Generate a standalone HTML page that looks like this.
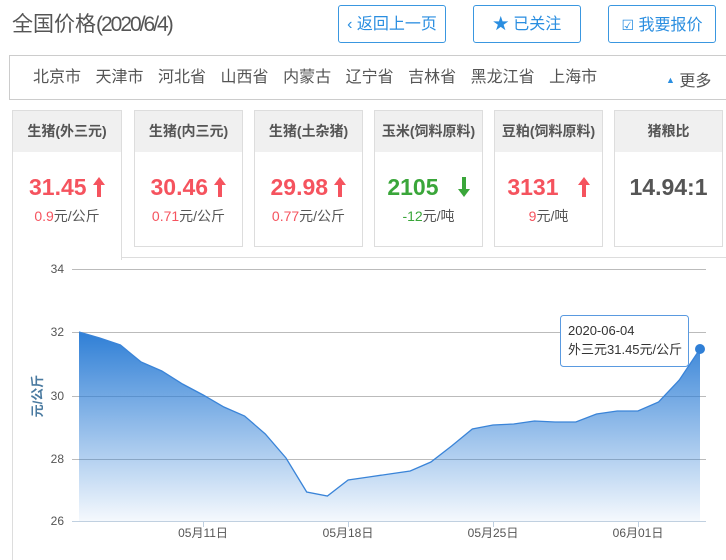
<!DOCTYPE html>
<html><head><meta charset="utf-8"><style>
body{margin:0;width:726px;height:558px;overflow:hidden;background:#fff;font-family:"Liberation Sans","Noto Sans CJK SC",sans-serif;position:relative}
.a{position:absolute}
.btn{position:absolute;top:5px;height:38px;width:108px;border:1px solid #3a97e0;border-radius:3px;color:#2a8ee0;font-size:16px;line-height:38px;text-align:center;box-sizing:border-box}
.card{position:absolute;top:110px;width:109px;height:137px;border:1px solid #ddd;box-sizing:border-box;text-align:center}
.card .h{background:#f0f0f0;height:41px;line-height:41px;font-size:14px;font-weight:bold;color:#555}
.card .v{font-size:23px;font-weight:bold;margin-top:20px;height:30px;line-height:30px}
.card .s{font-size:14px;color:#555;margin-top:4px}
.r{color:#f5535e}.g{color:#3aa63a}
.reg span{margin-right:14.5px}
svg.ar{vertical-align:-2px}
</style></head><body>
<div class="a" style="left:12px;top:8px;font-size:21px;color:#555">全国价格<span style="letter-spacing:-2px">(2020/6/4)</span></div>
<div class="btn" style="left:338px">&lsaquo; 返回上一页</div>
<div class="btn" style="left:473px">★ 已关注</div>
<div class="btn" style="left:608px"><span style="font-size:14px">☑</span> 我要报价</div>
<div class="a reg" style="left:9px;top:55px;width:730px;height:45px;border:1px solid #ccc;box-sizing:border-box;font-size:16px;color:#555;line-height:43px;padding-left:23px">
<span>北京市</span><span>天津市</span><span>河北省</span><span>山西省</span><span>内蒙古</span><span>辽宁省</span><span>吉林省</span><span>黑龙江省</span><span>上海市</span></div>
<div class="a" style="left:666px;top:67px;font-size:16px;color:#555"><span style="color:#2a8ee0;font-size:9px;vertical-align:3px">▲</span> 更多</div>
<div class="a" style="left:122px;top:257px;width:610px;border-top:1px solid #ddd"></div>
<div class="a" style="left:12px;top:110px;width:1px;height:450px;background:#ddd"></div>
<div class="card" style="left:13px;height:150px;border-bottom:none;border-left:none"><div class="h">生猪(外三元)</div><div class="v r">31.45 <svg class="ar" width="12" height="20" viewBox="0 0 12 20"><path d="M6 0L0 8h4v12h4V8h4z" fill="#f5535e"/></svg></div><div class="s"><span class="r">0.9</span>元/公斤</div></div>
<div class="card" style="left:134px"><div class="h">生猪(内三元)</div><div class="v r">30.46 <svg class="ar" width="12" height="20" viewBox="0 0 12 20"><path d="M6 0L0 8h4v12h4V8h4z" fill="#f5535e"/></svg></div><div class="s"><span class="r">0.71</span>元/公斤</div></div>
<div class="card" style="left:254px"><div class="h">生猪(土杂猪)</div><div class="v r">29.98 <svg class="ar" width="12" height="20" viewBox="0 0 12 20"><path d="M6 0L0 8h4v12h4V8h4z" fill="#f5535e"/></svg></div><div class="s"><span class="r">0.77</span>元/公斤</div></div>
<div class="card" style="left:374px"><div class="h">玉米(饲料原料)</div><div class="v g">2105 &nbsp;&nbsp;<svg class="ar" width="12" height="20" viewBox="0 0 12 20"><path d="M6 20L0 12h4V0h4v12h4z" fill="#3aa63a"/></svg></div><div class="s"><span class="g">-12</span>元/吨</div></div>
<div class="card" style="left:494px"><div class="h">豆粕(饲料原料)</div><div class="v r">3131 &nbsp;&nbsp;<svg class="ar" width="12" height="20" viewBox="0 0 12 20"><path d="M6 0L0 8h4v12h4V8h4z" fill="#f5535e"/></svg></div><div class="s"><span class="r">9</span>元/吨</div></div>
<div class="card" style="left:614px"><div class="h">猪粮比</div><div class="v" style="color:#555">14.94:1</div></div>
<svg class="a" style="left:0;top:0" width="726" height="558">
<defs><linearGradient id="gr" x1="0" y1="0" x2="0" y2="1"><stop offset="0" stop-color="#2f7fd6"/><stop offset="1" stop-color="#2f7fd6" stop-opacity="0.05"/></linearGradient></defs>
<g stroke="#bbb" stroke-width="1"><line x1="72" x2="706" y1="269.5" y2="269.5"/><line x1="72" x2="706" y1="332.5" y2="332.5"/><line x1="72" x2="706" y1="396.5" y2="396.5"/><line x1="72" x2="706" y1="459.5" y2="459.5"/></g>
<polygon fill="url(#gr)" points="79,521 79,332 99.7,338 120.4,345 141.1,362 161.8,371 182.5,384 203.2,395 223.9,407 244.6,416 265.3,434 286,458 306.7,492 327.4,496 348.1,480 368.8,477 389.5,474 410.2,471 430.9,462 451.6,446 472.3,429 493,425 513.7,424 534.4,421 555.1,422 575.8,422 596.5,414 617.2,411 637.9,411 658.6,402 679.3,380 700,349 700,521"/>
<polyline fill="none" stroke="#3a84d8" stroke-width="1.3" points="79,332 99.7,338 120.4,345 141.1,362 161.8,371 182.5,384 203.2,395 223.9,407 244.6,416 265.3,434 286,458 306.7,492 327.4,496 348.1,480 368.8,477 389.5,474 410.2,471 430.9,462 451.6,446 472.3,429 493,425 513.7,424 534.4,421 555.1,422 575.8,422 596.5,414 617.2,411 637.9,411 658.6,402 679.3,380 700,349"/>
<line x1="72" x2="706" y1="521.5" y2="521.5" stroke="#c0d0e0"/>
<g stroke="#c0d0e0"><line x1="203.5" x2="203.5" y1="521" y2="527"/><line x1="348.5" x2="348.5" y1="521" y2="527"/><line x1="493.5" x2="493.5" y1="521" y2="527"/><line x1="638.5" x2="638.5" y1="521" y2="527"/></g>
<circle cx="700" cy="349" r="5" fill="#2f7fd6"/>
<g font-size="12" fill="#555" font-family="Liberation Sans,Noto Sans CJK SC,sans-serif">
<text x="64" y="273" text-anchor="end">34</text><text x="64" y="336" text-anchor="end">32</text><text x="64" y="400" text-anchor="end">30</text><text x="64" y="463" text-anchor="end">28</text><text x="64" y="525" text-anchor="end">26</text>
<text x="203" y="537" text-anchor="middle">05月11日</text><text x="348" y="537" text-anchor="middle">05月18日</text><text x="493" y="537" text-anchor="middle">05月25日</text><text x="638" y="537" text-anchor="middle">06月01日</text>
<text transform="translate(42,396) rotate(-90)" text-anchor="middle" fill="#4a7aa0" font-size="13" font-weight="bold">元/公斤</text>
</g>
<rect x="560.5" y="315.5" width="128" height="51" rx="3" fill="#fff" stroke="#5a9ae0"/>
<g font-size="13" fill="#333" font-family="Liberation Sans,Noto Sans CJK SC,sans-serif"><text x="568" y="335">2020-06-04</text><text x="568" y="354">外三元31.45元/公斤</text></g>
</svg>
</body></html>
